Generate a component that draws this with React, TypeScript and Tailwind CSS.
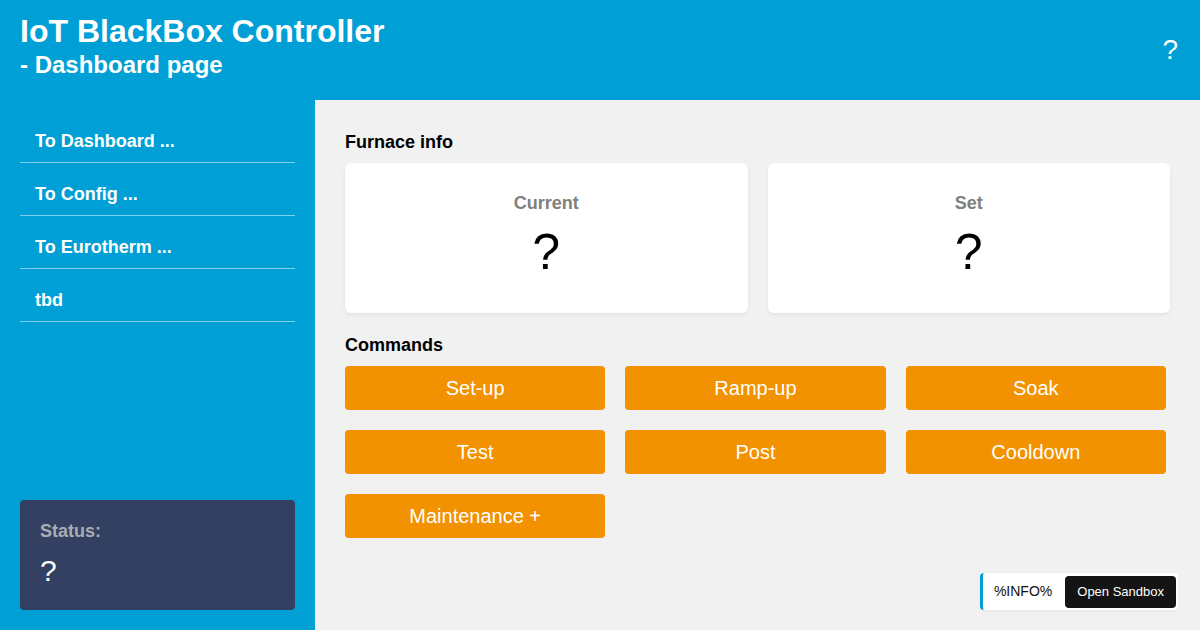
import React from 'react'

const navItems = ['To Dashboard ...', 'To Config ...', 'To Eurotherm ...', 'tbd']
const commands = ['Set-up', 'Ramp-up', 'Soak', 'Test', 'Post', 'Cooldown', 'Maintenance +']

export default function App() {
  return (
    <div className="w-[1200px] h-[630px] flex flex-col bg-[#f1f1f1] font-['Liberation_Sans',Arial,sans-serif] overflow-hidden relative">
      {/* Header */}
      <header className="h-[100px] bg-[#009fd5] text-white flex items-start justify-between px-5 shrink-0">
        <div className="pt-[12px]">
          <h1 className="text-[32px] font-bold leading-[38px]">IoT BlackBox Controller</h1>
          <h2 className="text-[24px] font-bold leading-[30px]">- Dashboard page</h2>
        </div>
        <div className="text-[28px] leading-none pt-[36px] pr-[2px]">?</div>
      </header>

      <div className="flex flex-1 min-h-0">
        {/* Sidebar */}
        <aside className="w-[315px] bg-[#009fd5] flex flex-col justify-between px-5 pt-[10px] pb-5">
          <nav className="flex flex-col">
            {navItems.map((item) => (
              <a
                key={item}
                className="text-white font-bold text-[18px] leading-[22px] px-[15px] h-[53px] pt-[20px] border-b border-[#7fd0ec]"
              >
                {item}
              </a>
            ))}
          </nav>
          <div className="bg-[#344061] rounded-[4px] h-[110px] px-5 pt-[20px]">
            <div className="text-[#a9adb6] font-bold text-[18px] leading-[22px]">Status:</div>
            <div className="text-white text-[30px] leading-[34px] mt-[12px]">?</div>
          </div>
        </aside>

        {/* Main */}
        <main className="flex-1 pl-[30px] pr-[30px] pt-[31px]">
          <h3 className="font-bold text-[18px] leading-[22px] text-black">Furnace info</h3>
          <div className="grid grid-cols-2 gap-5 mt-[10px]">
            {['Current', 'Set'].map((label) => (
              <div
                key={label}
                className="bg-white rounded-[6px] h-[150px] shadow-[0_2px_4px_rgba(0,0,0,0.06)] flex flex-col items-center pt-[29px]"
              >
                <div className="text-[#808080] font-bold text-[18px] leading-[22px]">{label}</div>
                <div className="text-black text-[50px] leading-[56px] mt-[10px]">?</div>
              </div>
            ))}
          </div>

          <h3 className="font-bold text-[18px] leading-[22px] text-black mt-[21px]">Commands</h3>
          <div className="grid grid-cols-3 gap-5 mt-[10px] pr-[4px]">
            {commands.map((cmd) => (
              <button
                key={cmd}
                className="bg-[#f39200] text-white text-[20px] h-[44px] rounded-[4px] flex items-center justify-center"
              >
                {cmd}
              </button>
            ))}
          </div>
        </main>
      </div>

      {/* Sandbox badge */}
      <div className="absolute right-[22px] bottom-[20px] flex items-center bg-white border-l-[3px] border-[#009fd5] rounded-[4px] h-[37px] pl-[11px] pr-[2px] shadow-[0_1px_3px_rgba(0,0,0,0.05)]">
        <span className="text-[14px] text-[#111] mr-[13px]">%INFO%</span>
        <button className="bg-[#141414] text-white text-[13px] rounded-[4px] h-[32px] px-[12px]">Open Sandbox</button>
      </div>
    </div>
  )
}
